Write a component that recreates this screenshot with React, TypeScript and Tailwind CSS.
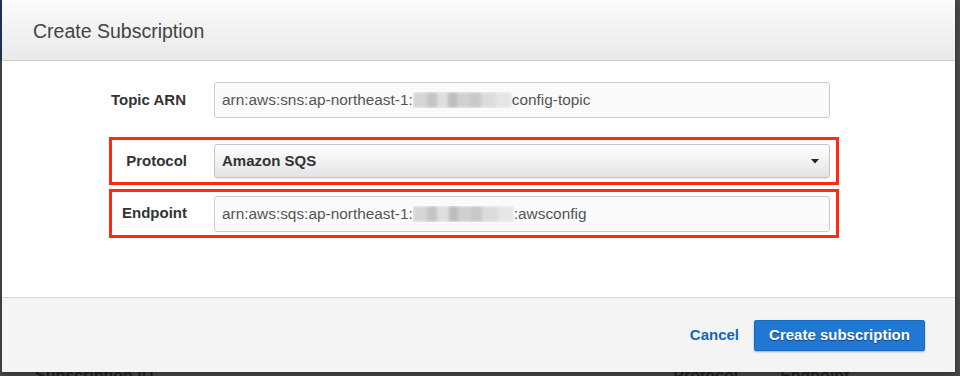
import React from 'react';

const Blur = ({ w }: { w: number }) => (
  <span className="inline-block align-middle overflow-hidden" style={{ width: w }}>
    <span className="flex h-[16px] blur-[1.5px]">
      <span className="w-[14%] bg-[#d6d6d6]" />
      <span className="w-[10%] bg-[#c4c4c4]" />
      <span className="w-[12%] bg-[#dedede]" />
      <span className="w-[9%] bg-[#bdbdbd]" />
      <span className="w-[13%] bg-[#d0d0d0]" />
      <span className="w-[11%] bg-[#c8c8c8]" />
      <span className="w-[15%] bg-[#dcdcdc]" />
      <span className="w-[16%] bg-[#e6e6e6]" />
    </span>
  </span>
);

const App = () => {
  return (
    <div className="relative h-[376px] w-[960px] overflow-hidden bg-[#4a4a4a] font-['Liberation_Sans',Arial,sans-serif]">
      {/* page behind the modal */}
      <div className="absolute left-0 top-0 h-[60px] w-[2px] bg-[#1f3a5c]" />
      <div className="absolute left-0 top-[366px] flex w-full text-[16px] font-bold leading-[20px] text-[#222]">
        <span className="ml-[35px]">Subscription ID</span>
        <span className="ml-[520px]">Protocol</span>
        <span className="ml-[42px]">Endpoint</span>
      </div>

      <div className="absolute left-[2px] top-0 flex h-[372px] w-[953px] flex-col bg-white shadow-[0_2px_6px_rgba(0,0,0,0.4)]">
        <div className="flex h-[61px] items-center border-b border-[#cfcfcf] bg-gradient-to-b from-[#fbfbfb] to-[#e9e9e9] px-[31px] pt-[4px]">
          <h1 className="text-[19.5px] text-[#444]">Create Subscription</h1>
        </div>

        <div className="flex flex-1 flex-col pt-[21px]">
          <div className="flex items-center">
            <label className="w-[184px] text-right text-[15px] font-bold text-[#333]">Topic ARN</label>
            <div className="ml-[28px] flex h-[36px] w-[616px] items-center rounded-[3px] border border-[#cccccc] bg-[#fafafa] px-[7px] text-[15.4px] text-[#555]">
              <span>arn:aws:sns:ap-northeast-1:</span>
              <Blur w={99} />
              <span>config-topic</span>
            </div>
          </div>

          <div className="ml-[107px] mt-[19px] flex h-[48px] w-[730px] items-center border-[3px] border-[#ff2a12]">
            <label className="w-[75px] text-right text-[15px] font-bold text-[#333]">Protocol</label>
            <div className="ml-[27px] flex h-[34px] w-[616px] items-center justify-between rounded-[3px] border border-[#c4c4c4] bg-gradient-to-b from-[#ffffff] to-[#e4e4e4] pl-[7px] pr-[10px] text-[15px] font-bold text-[#333] shadow-[0_1px_1px_rgba(0,0,0,0.08)]">
              <span>Amazon SQS</span>
              <svg width="8" height="5" viewBox="0 0 8 5">
                <path d="M0 0 L8 0 L4 4.5 Z" fill="#222" />
              </svg>
            </div>
          </div>

          <div className="ml-[107px] mt-[4px] flex h-[49px] w-[730px] items-center border-[3px] border-[#ff2a12]">
            <label className="w-[75px] text-right text-[15px] font-bold text-[#333]">Endpoint</label>
            <div className="ml-[27px] flex h-[36px] w-[616px] items-center rounded-[3px] border border-[#cccccc] bg-[#fafafa] px-[7px] text-[15.4px] text-[#555]">
              <span>arn:aws:sqs:ap-northeast-1:</span>
              <Blur w={101} />
              <span>:awsconfig</span>
            </div>
          </div>
        </div>

        <div className="flex h-[75px] items-center justify-end gap-[15px] border-t border-[#d6d6d6] bg-[#f4f4f4] pr-[30px]">
          <button className="text-[15px] font-bold text-[#1166bb]">Cancel</button>
          <button className="h-[31px] w-[171px] rounded-[2px] border border-[#1a6bc0] bg-[#1f78d1] text-[15px] font-bold text-white shadow-[0_1px_2px_rgba(0,0,0,0.3)] [text-shadow:0_1px_1px_rgba(0,0,0,0.45)]">
            Create subscription
          </button>
        </div>
      </div>
    </div>
  );
};

export default App;
